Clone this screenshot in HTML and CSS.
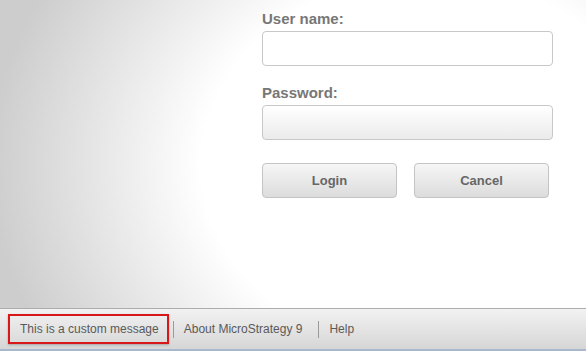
FILE: index.html
```html
<!DOCTYPE html>
<html lang="en">
<head>
    <meta charset="UTF-8">
    <title>MicroStrategy Login</title>
    <link rel="stylesheet" href="styles.css">
</head>
<body>
    <div class="page">
        <div class="login-area">
            <form class="login-form">
                <label class="field-label" for="uid">User name:</label>
                <input class="field user-field" id="uid" type="text">
                <label class="field-label pwd-label" for="pwd">Password:</label>
                <input class="field pwd-field" id="pwd" type="password">
                <div class="buttons">
                    <button type="button" class="btn">Login</button>
                    <button type="button" class="btn">Cancel</button>
                </div>
            </form>
        </div>

        <div class="footer">
            <span class="custom-msg">This is a custom message</span>
            <span class="footer-link about">About MicroStrategy 9</span>
            <span class="footer-link">Help</span>
        </div>
    </div>
</body>
</html>
```

FILE: styles.css
```css
*{
    margin: 0;
    padding: 0;
    box-sizing: border-box;
    font-family: "Liberation Sans", Arial, sans-serif;
}
html, body{
    width: 586px;
    height: 351px;
    overflow: hidden;
}
.page{
    display: flex;
    flex-direction: column;
    height: 351px;
}
.login-area{
    flex: 1;
    padding: 10px 0 0 262px;
    background: radial-gradient(ellipse 440px 360px at 430px 165px, #ffffff 52%, #cdcdcd 100%);
}
.login-form{
    display: flex;
    flex-direction: column;
    width: 291px;
}
.field-label{
    font-size: 15px;
    font-weight: bold;
    line-height: 18px;
    color: #777;
    margin-bottom: 3px;
}
.pwd-label{
    margin-top: 18px;
}
.field{
    height: 35px;
    width: 291px;
    border: 1px solid #c8c8c8;
    border-radius: 4px;
    background: #fff;
    outline: none;
}
.pwd-field{
    background: linear-gradient(#ffffff, #ebebeb);
}
.buttons{
    display: flex;
    gap: 17px;
    margin-top: 23px;
}
.btn{
    width: 135px;
    height: 35px;
    border: 1px solid #c4c4c4;
    border-radius: 4px;
    background: linear-gradient(#f6f6f6, #dcdcdc);
    font-size: 13px;
    font-weight: bold;
    color: #666;
}
.footer{
    height: 43px;
    display: flex;
    align-items: center;
    padding-left: 8px;
    border-top: 1px solid #acacac;
    border-bottom: 2px solid #a9b9cb;
    background: linear-gradient(#f2f2f2, #d6d6d6);
    font-size: 12px;
    color: #5a5a5a;
}
.custom-msg{
    height: 30px;
    line-height: 26px;
    padding: 0 8px 0 10px;
    margin-right: 4px;
    border: 2px solid #d81818;
    box-shadow: 0 1px 2px rgba(0,0,0,0.25);
}
.footer-link{
    line-height: 17px;
    border-left: 1px solid #9a9a9a;
    padding: 0 10px;
}
.about{
    padding-right: 16px;
}
```
